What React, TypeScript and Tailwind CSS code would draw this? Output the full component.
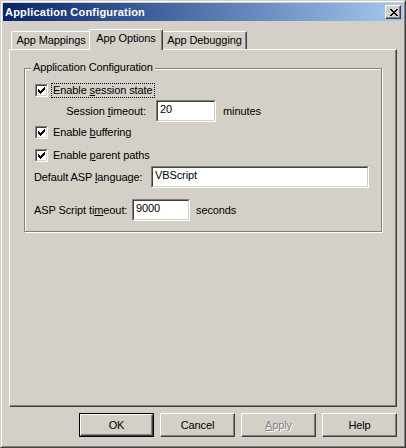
import React from "react";

const FONT = "font-['Liberation_Sans',Arial,sans-serif] text-[11px] leading-[13px] text-black tracking-[-0.1px]";

function U({ children }: { children: React.ReactNode }) {
  return <span className="underline decoration-1 underline-offset-[1px]">{children}</span>;
}

function CheckBox() {
  const cols = [
    [2, 3],
    [3, 3],
    [4, 3],
    [3, 3],
    [2, 3],
    [1, 3],
    [0, 3],
  ];
  return (
    <div className="w-[13px] h-[13px] shrink-0 border border-t-[#808080] border-l-[#808080] border-r-white border-b-white">
      <div className="w-full h-full border border-t-[#404040] border-l-[#404040] border-r-[#d4d0c8] border-b-[#d4d0c8] bg-white">
        <svg width="9" height="9" viewBox="0 0 9 9" shapeRendering="crispEdges" className="block">
          {cols.map(([y, h], i) => (
            <rect key={i} x={1 + i} y={1 + y} width={1} height={h} fill="#000" />
          ))}
        </svg>
      </div>
    </div>
  );
}

function TextInput({ value, className }: { value: string; className: string }) {
  return (
    <div className={`h-[22px] shrink-0 border border-t-[#808080] border-l-[#808080] border-r-white border-b-white ${className}`}>
      <div className="w-full h-full border border-t-[#404040] border-l-[#404040] border-r-[#d4d0c8] border-b-[#d4d0c8] bg-white flex items-center pl-[2px] pb-[3px]">
        {value}
      </div>
    </div>
  );
}

function Button({ children, isDefault, disabled }: { children: React.ReactNode; isDefault?: boolean; disabled?: boolean }) {
  const inner = (
    <div className="w-full h-full border border-t-white border-l-white border-r-[#404040] border-b-[#404040] shadow-[inset_-1px_-1px_0_#808080] flex items-center justify-center">
      <span className={disabled ? "text-[#808080] [text-shadow:1px_1px_0_#fff]" : ""}>{children}</span>
    </div>
  );
  if (isDefault) {
    return <div className="w-[75px] h-[24px] border border-black">{inner}</div>;
  }
  return <div className="w-[75px] h-[24px]">{inner}</div>;
}

function CloseGlyph() {
  const rows = [
    [0, 2, 6, 2],
    [1, 2, 5, 2],
    [2, 4],
    [3, 2],
    [2, 4],
    [1, 2, 5, 2],
    [0, 2, 6, 2],
  ];
  const rects: React.ReactNode[] = [];
  rows.forEach((r, y) => {
    for (let i = 0; i < r.length; i += 2) {
      rects.push(<rect key={`${y}-${i}`} x={r[i]} y={y} width={r[i + 1]} height={1} fill="#000" />);
    }
  });
  return (
    <svg width="8" height="7" viewBox="0 0 8 7" shapeRendering="crispEdges" className="block">
      {rects}
    </svg>
  );
}

export default function App() {
  return (
    <div className={`w-[406px] h-[448px] bg-[#d4d0c8] ${FONT}`}>
      <div className="w-full h-full border border-t-[#d4d0c8] border-l-[#d4d0c8] border-r-[#404040] border-b-[#404040]">
        <div className="w-full h-full border border-t-white border-l-white border-r-[#808080] border-b-[#808080] p-[1px] flex flex-col">
          {/* Title bar */}
          <div className="h-[18px] shrink-0 flex items-center justify-between bg-gradient-to-r from-[#0a246a] to-[#a6caf0]">
            <span className="pl-[2px] font-bold text-white text-[11px] tracking-[0.2px]">Application Configuration</span>
            <div className="mr-[2px] w-[16px] h-[14px] border border-t-white border-l-white border-r-[#404040] border-b-[#404040] shadow-[inset_-1px_-1px_0_#808080] bg-[#d4d0c8] flex items-center justify-center pl-[1px]">
              <CloseGlyph />
            </div>
          </div>

          {/* Tabs + panel */}
          <div className="px-[6px] mt-[8px] flex flex-col">
            <div className="h-[20px] flex items-end pl-[2px]">
              <div className="w-[80px] h-[18px] border-l border-t border-l-white border-t-white border-r border-r-[#404040] shadow-[inset_-1px_0_0_#808080] rounded-t-[2px] flex items-center justify-center pb-[1px]">
                App Mappings
              </div>
              <div className="relative z-10 w-[74px] h-[21px] -mx-[2px] -mb-[1px] bg-[#d4d0c8] border-l border-t border-l-white border-t-white border-r border-r-[#404040] shadow-[inset_-1px_0_0_#808080] rounded-t-[2px] flex items-center justify-center pb-[3px]">
                App Options
              </div>
              <div className="w-[86px] h-[18px] border-t border-t-white border-r border-r-[#404040] shadow-[inset_-1px_0_0_#808080] rounded-t-[2px] flex items-center justify-center pb-[1px] pl-[2px]">
                App Debugging
              </div>
            </div>

            <div className="h-[358px] border border-t-white border-l-white border-r-[#404040] border-b-[#404040] shadow-[inset_-1px_-1px_0_#808080] px-[14px] pt-[18px]">
              {/* Group box */}
              <div className="relative border border-[#808080] shadow-[1px_1px_0_#fff,inset_1px_1px_0_#fff] pt-[13px] pb-[10px] pl-[10px] flex flex-col">
                <span className="absolute left-[6px] -top-[8px] px-[2px] bg-[#d4d0c8] leading-[13px]">
                  Application Configuration
                </span>

                <div className="h-[16px] flex items-center">
                  <CheckBox />
                  <span className="ml-[3px] px-[1px] border border-dotted border-black leading-[13px]">
                    Enable <U>s</U>ession state
                  </span>
                </div>

                <div className="h-[22px] mt-[2px] flex items-center">
                  <div className="w-[121px] text-right pr-[10px]">
                    Session <U>t</U>imeout:
                  </div>
                  <TextInput value="20" className="w-[60px]" />
                  <span className="ml-[7px]">minutes</span>
                </div>

                <div className="h-[16px] mt-[2px] flex items-center">
                  <CheckBox />
                  <span className="ml-[5px]">
                    Enable <U>b</U>uffering
                  </span>
                </div>

                <div className="h-[16px] mt-[7px] flex items-center">
                  <CheckBox />
                  <span className="ml-[5px]">
                    Enable <U>p</U>arent paths
                  </span>
                </div>

                <div className="h-[22px] mt-[3px] flex items-center">
                  <div className="w-[117px] -ml-[1px]">
                    Default ASP <U>l</U>anguage:
                  </div>
                  <TextInput value="VBScript" className="w-[218px]" />
                </div>

                <div className="h-[22px] mt-[11px] flex items-center">
                  <div className="w-[98px] -ml-[1px]">
                    ASP Script ti<U>m</U>eout:
                  </div>
                  <TextInput value="9000" className="w-[58px]" />
                  <span className="ml-[6px]">seconds</span>
                </div>
              </div>
            </div>
          </div>

          {/* Buttons */}
          <div className="mt-[6px] pr-[6px] flex justify-end gap-[6px]">
            <Button isDefault>OK</Button>
            <Button>Cancel</Button>
            <Button disabled>
              <U>A</U>pply
            </Button>
            <Button>Help</Button>
          </div>
        </div>
      </div>
    </div>
  );
}
